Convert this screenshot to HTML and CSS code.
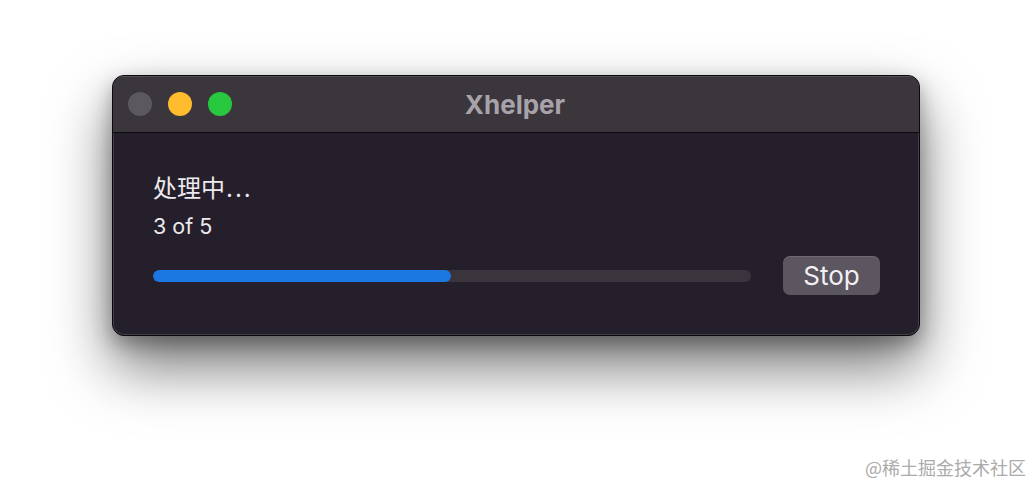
FILE: index.html
```html
<!DOCTYPE html>
<html lang="zh">
<head>
<meta charset="utf-8">
<title>Xhelper</title>
<link rel="stylesheet" href="styles.css">
</head>
<body>
<div class="stage">
  <div class="window">
    <div class="titlebar">
      <div class="lights">
        <span class="light grey"></span>
        <span class="light yellow"></span>
        <span class="light green"></span>
      </div>
      <div class="title">Xhelper</div>
    </div>
    <div class="content">
      <div class="status">处理中<span class="dots">...</span></div>
      <div class="count">3 of 5</div>
      <div class="row">
        <div class="track"><div class="fill" style="width:298px"></div></div>
        <button class="stop">Stop</button>
      </div>
    </div>
  </div>
</div>
<div class="watermark">@稀土掘金技术社区</div>
</body>
</html>
```
FILE: styles.css
```css
html, body {
  margin: 0;
  padding: 0;
  background: #ffffff;
  width: 1032px;
  height: 484px;
  overflow: hidden;
  font-family: "Inter", "Noto Sans", "Noto Sans CJK SC", sans-serif;
}
.stage {
  padding: 75px 0 0 112px;
}
.window {
  width: 806px;
  height: 259px;
  border: 1px solid #0b090c;
  border-radius: 12px;
  background: #241f2a;
  overflow: hidden;
  box-shadow: inset 0 0 0 1px rgba(255,255,255,0.14), 0 30px 60px rgba(0,0,0,0.55), 0 8px 20px rgba(0,0,0,0.3);
  display: flex;
  flex-direction: column;
}
.titlebar {
  height: 56px;
  background: #3b363c;
  border-bottom: 1px solid #0e0b10;
  position: relative;
  display: flex;
  align-items: center;
  box-shadow: inset 0 1px 0 rgba(255,255,255,0.12);
}
.lights {
  display: flex;
  gap: 16px;
  padding-left: 15px;
}
.light {
  width: 24px;
  height: 24px;
  border-radius: 50%;
  display: block;
}
.grey { background: #5c585f; }
.yellow { background: #febc2e; }
.green { background: #28c840; }
.title {
  position: absolute;
  left: 0;
  right: 0;
  top: 0;
  bottom: 0;
  display: flex;
  align-items: center;
  justify-content: center;
  color: #a8a3aa;
  font-weight: 700;
  font-size: 26px;
  padding-right: 2px;
}
.content {
  padding: 41px 39px 0 40px;
  color: #eceaee;
}
.status {
  font-size: 24px;
  line-height: 30px;
}
.dots {
  letter-spacing: 2px;
  margin-left: 1px;
}
.count {
  font-size: 21.5px;
  line-height: 26px;
  margin-top: 9px;
}
.row {
  margin-top: 17px;
  display: flex;
  align-items: center;
  gap: 32px;
}
.track {
  width: 598px;
  height: 12px;
  border-radius: 6px;
  background: #3a353d;
  overflow: hidden;
}
.fill {
  height: 100%;
  border-radius: 6px;
  background: #1b78e2;
}
.stop {
  width: 97px;
  height: 39px;
  border: none;
  border-radius: 7px;
  background: #5b5660;
  color: #f2f0f3;
  font-family: "Inter", "Noto Sans", sans-serif;
  font-size: 26px;
  padding: 0;
  box-shadow: inset 0 1px 0 rgba(255,255,255,0.12);
}
.watermark {
  position: absolute;
  right: 6px;
  top: 455px;
  font-family: "Noto Sans CJK SC", sans-serif;
  font-size: 18px;
  color: #ababab;
  line-height: 24px;
}
```
